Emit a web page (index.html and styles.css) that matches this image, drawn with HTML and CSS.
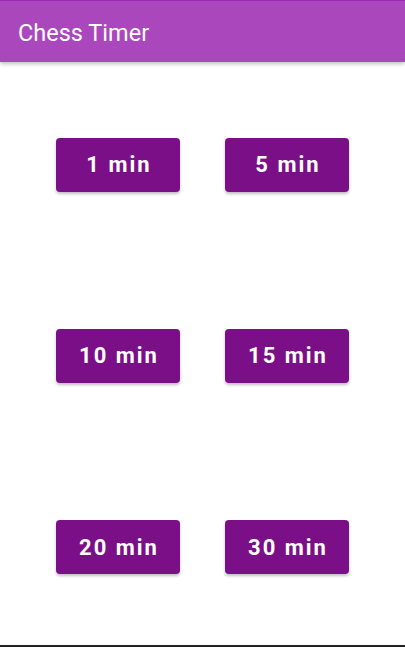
FILE: index.html
```html
<!DOCTYPE html>
<html lang="en">
<head>
    <meta charset="UTF-8">
    <meta name="viewport" content="width=device-width, initial-scale=1.0">
    <title>Chess Timer</title>
    <link rel="stylesheet" href="styles.css">
</head>
<body>
    <header class="app-bar">
        <h1>Chess Timer</h1>
    </header>
    <main class="timer-grid">
        <div class="timer-row">
            <button type="button" class="timer-btn">1 min</button>
            <button type="button" class="timer-btn">5 min</button>
        </div>
        <div class="timer-row">
            <button type="button" class="timer-btn">10 min</button>
            <button type="button" class="timer-btn">15 min</button>
        </div>
        <div class="timer-row">
            <button type="button" class="timer-btn">20 min</button>
            <button type="button" class="timer-btn">30 min</button>
        </div>
    </main>
</body>
</html>
```

FILE: styles.css
```css
/* General Styles */
html, body {
    height: 100%;
}
body {
    font-family: Roboto, 'Noto Sans', sans-serif;
    margin: 0;
    padding: 0;
    background-color: #fff;
    display: flex;
    flex-direction: column;
    box-sizing: border-box;
    border-bottom: 2px solid #222;
}
.app-bar {
    background-color: #ab47bc;
    border-top: 1px solid #9c27b0;
    height: 61px;
    display: flex;
    align-items: center;
    padding-left: 18px;
    box-shadow: 0 2px 4px rgba(0, 0, 0, 0.25);
    position: relative;
    z-index: 1;
}
h1 {
    margin: 0;
    color: #fff;
    font-size: 23.5px;
    font-weight: 400;
    padding-top: 3px;
}
.timer-grid {
    flex: 1;
    display: grid;
    grid-template-rows: repeat(3, 1fr);
    padding-top: 7px;
    padding-bottom: 2px;
}
.timer-row {
    display: flex;
    justify-content: center;
    align-items: center;
    gap: 45px;
}
.timer-btn {
    width: 124px;
    height: 54px;
    background-color: #7a0f87;
    color: #fff;
    border: none;
    border-radius: 4px;
    font-family: Roboto, sans-serif;
    font-size: 22px;
    font-weight: 700;
    letter-spacing: 2px;
    padding: 0 0 0 2px;
    box-shadow: 0 2px 3px rgba(0, 0, 0, 0.25);
    cursor: pointer;
}
```
